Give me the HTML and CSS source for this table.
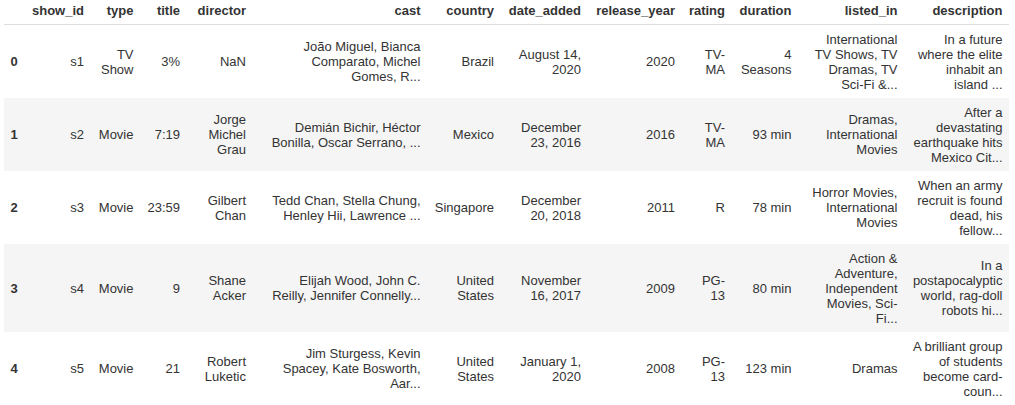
FILE: index.html
```html
<!DOCTYPE html>
<html>
<head>
<meta charset="utf-8">
<link rel="stylesheet" href="styles.css">
</head>
<body>
<div class="wrap">
<table class="dataframe">
  <colgroup>
    <col class="c-idx"><col class="c-id"><col class="c-type"><col class="c-title"><col class="c-dir"><col class="c-cast"><col class="c-country"><col class="c-date"><col class="c-year"><col class="c-rating"><col class="c-dur"><col class="c-listed"><col class="c-desc">
  </colgroup>
  <thead>
    <tr>
      <th></th><th>show_id</th><th>type</th><th>title</th><th>director</th><th class="cast">cast</th><th>country</th><th>date_added</th><th>release_year</th><th>rating</th><th>duration</th><th class="listed">listed_in</th><th>description</th>
    </tr>
  </thead>
  <tbody>
    <tr>
      <th>0</th><td>s1</td><td>TV Show</td><td>3%</td><td>NaN</td><td class="cast">João Miguel, Bianca Comparato, Michel Gomes, R...</td><td>Brazil</td><td>August 14, 2020</td><td>2020</td><td>TV-MA</td><td>4 Seasons</td><td class="listed">International TV Shows, TV Dramas, TV Sci-Fi &amp;...</td><td>In a future where the elite inhabit an island ...</td>
    </tr>
    <tr>
      <th>1</th><td>s2</td><td>Movie</td><td>7:19</td><td>Jorge Michel Grau</td><td class="cast">Demián Bichir, Héctor Bonilla, Oscar Serrano, ...</td><td>Mexico</td><td>December 23, 2016</td><td>2016</td><td>TV-MA</td><td>93 min</td><td class="listed">Dramas, International Movies</td><td>After a devastating earthquake hits Mexico Cit...</td>
    </tr>
    <tr>
      <th>2</th><td>s3</td><td>Movie</td><td>23:59</td><td>Gilbert Chan</td><td class="cast">Tedd Chan, Stella Chung, Henley Hii, Lawrence ...</td><td>Singapore</td><td>December 20, 2018</td><td>2011</td><td>R</td><td>78 min</td><td class="listed">Horror Movies, International Movies</td><td>When an army recruit is found dead, his fellow...</td>
    </tr>
    <tr>
      <th>3</th><td>s4</td><td>Movie</td><td>9</td><td>Shane Acker</td><td class="cast">Elijah Wood, John C. Reilly, Jennifer Connelly...</td><td>United States</td><td>November 16, 2017</td><td>2009</td><td>PG-13</td><td>80 min</td><td class="listed">Action &amp; Adventure, Independent Movies, Sci-Fi...</td><td>In a postapocalyptic world, rag-doll robots hi...</td>
    </tr>
    <tr>
      <th>4</th><td>s5</td><td>Movie</td><td>21</td><td>Robert Luketic</td><td class="cast">Jim Sturgess, Kevin Spacey, Kate Bosworth, Aar...</td><td>United States</td><td>January 1, 2020</td><td>2008</td><td>PG-13</td><td>123 min</td><td class="listed">Dramas</td><td>A brilliant group of students become card-coun...</td>
    </tr>
  </tbody>
</table>
</div>
</body>
</html>
```
FILE: styles.css
```css
html, body {
  margin: 0;
  padding: 0;
  background: #ffffff;
}

.wrap {
  padding-left: 4px;
}

.dataframe {
  margin-top: -4px;
  width: 1005px;
  table-layout: fixed;
  border-collapse: collapse;
  border-spacing: 0;
  font-family: "Liberation Sans", Arial, sans-serif;
  font-size: 13px;
  line-height: normal;
  color: #333333;
}

.dataframe thead {
  border-bottom: 1px solid #dddddd;
}

.dataframe th,
.dataframe td {
  padding: 0.5em;
  text-align: right;
  vertical-align: middle;
  white-space: normal;
}

.dataframe thead th {
  font-weight: bold;
  vertical-align: bottom;
}

.dataframe tbody th {
  font-weight: bold;
  text-align: left;
}

.dataframe tbody tr:nth-child(even) {
  background: #f5f5f5;
}

/* narrower text measure inside wide cells, as in the source rendering */
.dataframe .cast {
  padding-left: 12.5px;
}

.dataframe .listed {
  padding-left: 10.5px;
}

.c-idx { width: 20.5px; }
.c-id { width: 66px; }
.c-type { width: 49.5px; }
.c-title { width: 46.5px; }
.c-dir { width: 66px; }
.c-cast { width: 174.5px; }
.c-country { width: 73.5px; }
.c-date { width: 87px; }
.c-year { width: 94px; }
.c-rating { width: 50px; }
.c-dur { width: 66.5px; }
.c-listed { width: 106px; }
.c-desc { width: 105px; }
```
